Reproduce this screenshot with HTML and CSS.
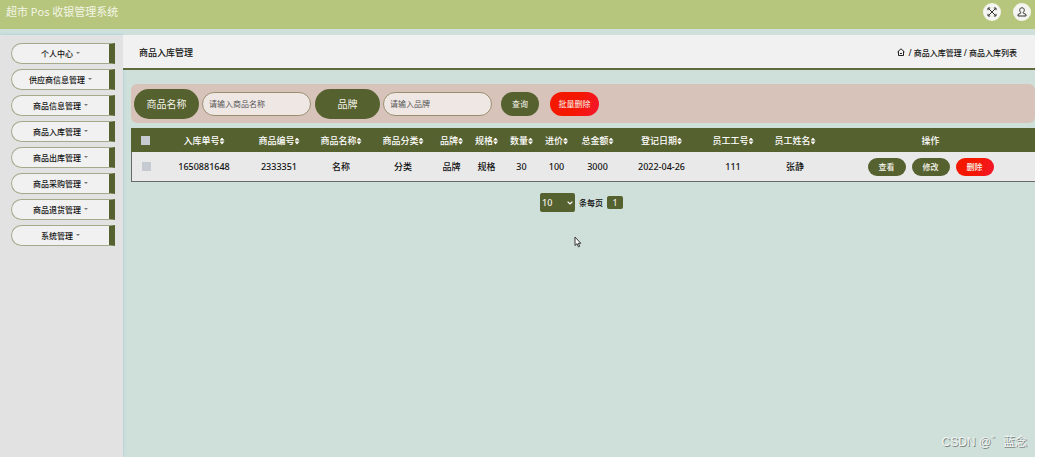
FILE: index.html
```
<!DOCTYPE html>
<html lang="zh-CN">
<head>
<meta charset="utf-8">
<title>超市 Pos 收银管理系统</title>
<link rel="stylesheet" href="styles.css">
</head>
<body>
<div class="app">
  <header class="topbar">
    <h1 class="brand">超市 Pos 收银管理系统</h1>
    <button class="round" type="button" aria-label="全屏">
      <svg width="10" height="10" viewBox="0 0 10 10" fill="none" stroke="#333" stroke-width="1"><path d="M1.500 1.500l7 7M8.500 1.500l-7 7M1 3.200V1h2.200M6.800 1H9v2.200M9 6.800V9H6.800M3.200 9H1V6.800"/></svg>
    </button>
    <button class="round" type="button" aria-label="用户">
      <svg width="10" height="10" viewBox="0 0 10 10" fill="none" stroke="#333" stroke-width="1"><path d="M5 .8c2.800 0 2.800 3 1.300 4.600v.8L9 7.500v1.500H1V7.500l2.700-1.300v-.8C2.200 3.800 2.200.8 5 .8z"/></svg>
    </button>
  </header>
  <div class="body">
    <nav class="side">
      <button class="menu" type="button">个人中心<i class="caret"></i></button>
      <button class="menu" type="button">供应商信息管理<i class="caret"></i></button>
      <button class="menu" type="button">商品信息管理<i class="caret"></i></button>
      <button class="menu" type="button">商品入库管理<i class="caret"></i></button>
      <button class="menu" type="button">商品出库管理<i class="caret"></i></button>
      <button class="menu" type="button">商品采购管理<i class="caret"></i></button>
      <button class="menu" type="button">商品退货管理<i class="caret"></i></button>
      <button class="menu" type="button">系统管理<i class="caret"></i></button>
    </nav>
    <main class="main">
      <div class="titlebar">
        <h2 class="title">商品入库管理</h2>
        <div class="crumbs">
          <a class="home" href="#" aria-label="首页"><svg width="8" height="8" viewBox="0 0 8 8" fill="none" stroke="#222" stroke-width="1"><path d="M.5 4L4 .8 7.500 4M1.500 3.200v4.300h5V3.200M3 5.500h2"/></svg></a>
          <span>/ 商品入库管理 / 商品入库列表</span>
        </div>
      </div>
      <div class="content">
        <form class="search">
          <label class="tag" for="name">商品名称</label>
          <input class="field" id="name" type="text" placeholder="请输入商品名称">
          <label class="tag" for="brand">品牌</label>
          <input class="field" id="brand" type="text" placeholder="请输入品牌">
          <button class="btn query" type="button">查询</button>
          <button class="btn batch danger" type="button">批量删除</button>
        </form>
        <table class="grid">
          <colgroup><col class="c-check"><col class="c-order"><col class="c-mid"><col class="c-mid"><col class="c-mid"><col class="c-small"><col class="c-small"><col class="c-small"><col class="c-small"><col class="c-sum"><col class="c-date"><col class="c-mid"><col class="c-mid"><col></colgroup>
          <thead>
            <tr>
              <th><input class="check" type="checkbox" aria-label="全选"></th>
              <th>入库单号<i class="sort"></i></th><th>商品编号<i class="sort"></i></th><th>商品名称<i class="sort"></i></th><th>商品分类<i class="sort"></i></th><th>品牌<i class="sort"></i></th><th>规格<i class="sort"></i></th><th>数量<i class="sort"></i></th><th>进价<i class="sort"></i></th><th>总金额<i class="sort"></i></th><th>登记日期<i class="sort"></i></th><th>员工工号<i class="sort"></i></th><th>员工姓名<i class="sort"></i></th><th>操作</th>
            </tr>
          </thead>
          <tbody>
            <tr>
              <td><input class="check" type="checkbox" aria-label="选择"></td>
              <td>1650881648</td><td>2333351</td><td>名称</td><td>分类</td><td>品牌</td><td>规格</td><td>30</td><td>100</td><td>3000</td><td>2022-04-26</td><td>111</td><td>张静</td>
              <td><div class="ops"><button class="btn small" type="button">查看</button><button class="btn small" type="button">修改</button><button class="btn small danger" type="button">删除</button></div></td>
            </tr>
          </tbody>
        </table>
        <div class="pager">
          <span class="sizebox">
            <select class="size" id="size"><option>10</option></select>
            <svg class="chev" width="6" height="4" viewBox="0 0 6 4" fill="none" stroke="#fff" stroke-width="1.2"><path d="M.6.6L3 3 5.400.6"/></svg>
          </span>
          <label for="size">条每页</label>
          <button class="page" type="button">1</button>
        </div>
      </div>
    </main>
  </div>
  <svg class="cursor" width="8" height="12" viewBox="0 0 8 12" fill="#fff" stroke="#333" stroke-width="1"><path d="M1 1v8.500l2-1.800 1.400 3.200 1.300-.6-1.400-3h2.500z"/></svg>
  <div class="mark">CSDN @゛蓝念</div>
</div>
</body>
</html>
```
FILE: styles.css
```
* { box-sizing: border-box; }
body {
  margin: 0;
  padding-right: 7px;
  background: #fff;
  color: #111;
  font-family: "Noto Sans", "Noto Sans CJK SC", sans-serif;
  font-size: 9px;
}
button, input, select { font: inherit; }
button { border: 0; padding: 0; }
.app {
  position: relative;
  display: flex;
  flex-direction: column;
  min-height: 100vh;
  background: #cfe0da;
}
.topbar {
  display: flex;
  align-items: center;
  gap: 12px;
  height: 29px;
  padding: 0 4px 5px 6px;
  background: #b6c67c;
}
.brand {
  flex: 1;
  margin: 0;
  color: #f3f5e6;
  font-size: 11px;
  line-height: 16px;
  font-weight: 400;
}
.round {
  display: grid;
  place-items: center;
  width: 18px;
  height: 18px;
  border-radius: 50%;
  background: #f4f4f0;
}
.body { flex: 1; display: flex; padding-top: 6px; }
.side {
  display: flex;
  flex-direction: column;
  gap: 5px;
  width: 123px;
  padding: 8px 8px 8px 11px;
  background: #e2e2e2;
  box-shadow: 0 0 3px #9fcbdc;
}
.menu {
  height: 21px;
  border: 1px solid #a3a98a;
  border-right: 6px solid #566130;
  border-radius: 11px 0 0 11px;
  background: #f1f1f1;
  color: #111;
  font-size: 8px;
  font-weight: 500;
}
.caret {
  display: inline-block;
  margin-left: 3px;
  border: 2px solid transparent;
  border-top-color: #777;
  border-bottom: 0;
  vertical-align: 3px;
}
.main { flex: 1; min-width: 0; }
.titlebar {
  display: flex;
  align-items: center;
  justify-content: space-between;
  height: 35px;
  padding: 1px 18px 0 16px;
  border-bottom: 2px solid #5f6b3c;
  background: #f1f1f1;
}
.title { margin: 0; font-size: 9px; font-weight: 500; }
.crumbs {
  display: flex;
  align-items: center;
  gap: 4px;
  font-size: 8px;
  font-weight: 500;
}
.home { display: flex; }
.content { padding: 14px 0 0 8px; }
.search {
  display: flex;
  align-items: center;
  height: 39px;
  padding: 0 3px;
  border-radius: 6px;
  background: #d7c3ba;
}
.tag {
  display: grid;
  place-items: center;
  width: 65px;
  height: 30px;
  border-radius: 15px;
  background: #566130;
  color: #f4f4ea;
  font-size: 10px;
}
.field {
  width: 109px;
  height: 24px;
  margin: 0 4px 0 3px;
  padding: 0 6px;
  border: 1px solid #98906f;
  border-radius: 12px;
  background: #efe7e4;
  font-size: 8px;
}
.field::placeholder { color: #555; opacity: 1; }
.btn {
  background: #566130;
  color: #f6f6ee;
  font-size: 8px;
}
.query { width: 38px; height: 24px; margin: 0 11px 0 5px; border-radius: 12px; }
.batch { width: 49px; height: 24px; border-radius: 12px; }
.danger { background: linear-gradient(110deg, #f51800 50%, #f4152f); }
.grid {
  width: 100%;
  margin-top: 5px;
  border: 0;
  border-spacing: 0;
  table-layout: fixed;
  background: #e9e9e9;
  text-align: center;
}
.grid th, .grid td { padding: 0; white-space: nowrap; }
.grid th {
  height: 24px;
  background: #566130;
  color: #fff;
  font-weight: 500;
}
.grid td { height: 30px; border-bottom: 1px solid #666b68; font-weight: 500; }
.grid td:first-child { border-left: 1px solid #666b68; }
.c-check { width: 29px; }
.c-order { width: 88px; }
.c-mid { width: 62px; }
.c-small { width: 35px; }
.c-sum { width: 47px; }
.c-date { width: 81px; }
.sort {
  display: inline-block;
  width: 5px;
  height: 7px;
  vertical-align: -1px;
  background: #fff;
  clip-path: polygon(50% 0, 100% 42%, 0 42%, 0 58%, 100% 58%, 50% 100%, 0 58%, 0 42%);
}
.check {
  display: block;
  appearance: none;
  width: 9px;
  height: 9px;
  margin: 0 auto;
  background: #c5cbd1;
}
.ops { display: flex; justify-content: center; gap: 6px; }
.small { width: 38px; height: 18px; border-radius: 9px; }
.pager {
  display: flex;
  align-items: center;
  justify-content: center;
  gap: 4px;
  margin-top: 11px;
  padding-right: 3px;
  font-size: 8px;
  font-weight: 500;
}
.sizebox { display: grid; align-items: center; }
.size {
  grid-area: 1 / 1;
  appearance: none;
  width: 35px;
  height: 19px;
  padding: 0 2px;
  border: 0;
  border-radius: 2px;
  background: #566130;
  color: #f4f4ea;
  font-size: 9px;
}
.chev { grid-area: 1 / 1; justify-self: end; margin-right: 2px; pointer-events: none; }
.page {
  width: 16px;
  height: 13px;
  border-radius: 2px;
  background: #566130;
  color: #f4f4ea;
  line-height: 13px;
}
.cursor { position: absolute; left: 574px; top: 236px; }
.mark {
  position: absolute;
  right: 8px;
  bottom: 6px;
  color: #f0f4f2;
  font-family: "Liberation Sans", "Noto Sans CJK SC", sans-serif;
  font-size: 12px;
  line-height: 18px;
  text-shadow: 1px 1px 0 #808683;
}
```
